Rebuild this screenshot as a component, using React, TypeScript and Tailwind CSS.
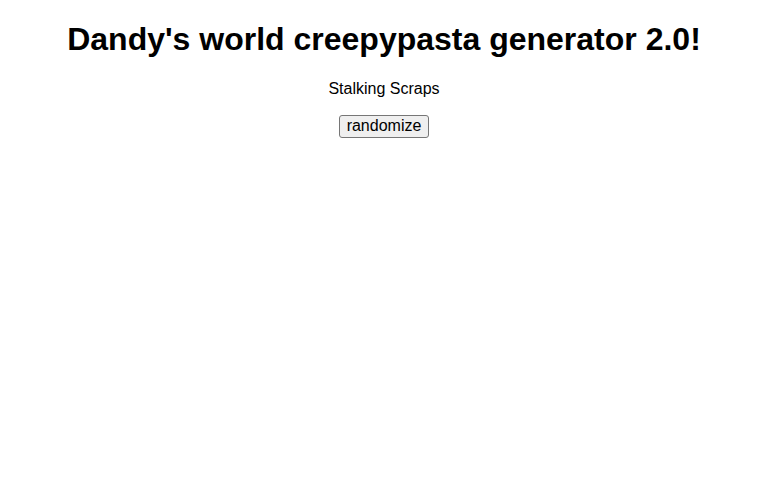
import React, { useState } from 'react';

const names = ['Stalking Scraps', 'Hungry Astro', 'Twisted Boxten', 'Fading Poppy', 'Smiling Dandy'];

export default function App() {
  const [name, setName] = useState(names[0]);

  const randomize = () => {
    setName(names[Math.floor(Math.random() * names.length)]);
  };

  return (
    <div className="min-h-screen bg-white text-black text-center font-['Liberation_Sans',Arial,sans-serif]">
      <h1 className="text-[32px] font-bold leading-[37px] pt-[21px] mb-[22px]">
        Dandy's world creepypasta generator 2.0!
      </h1>
      <p className="text-base leading-[18px] mb-4">{name}</p>
      <button
        onClick={randomize}
        className="text-base leading-[18px] px-[6px] py-[1px] h-[23px] w-[90px] bg-[#efefef] border border-[#767676] rounded-[3px] text-black"
      >
        randomize
      </button>
    </div>
  );
}
